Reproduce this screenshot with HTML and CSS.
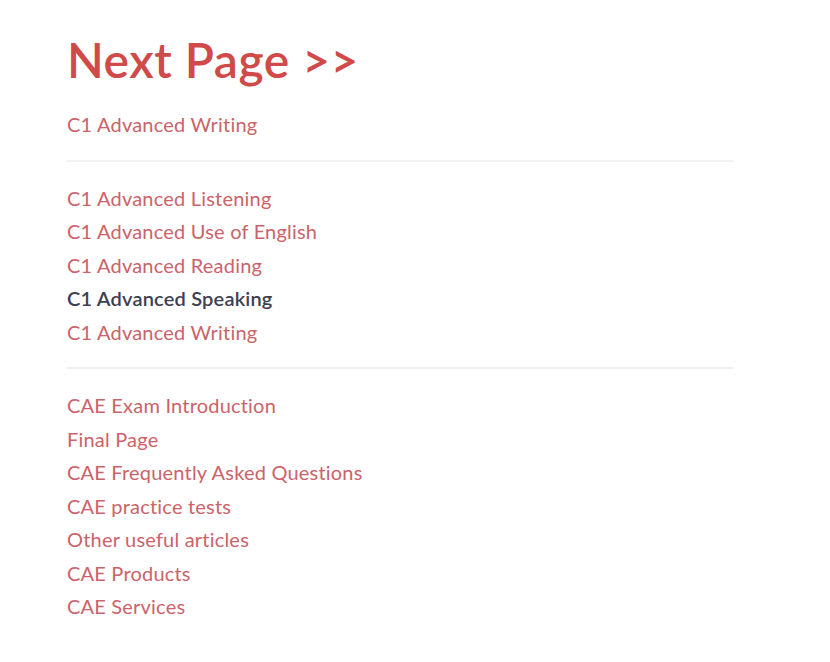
FILE: index.html
```html
<!DOCTYPE html>
<html lang="en">
<head>
  <meta charset="UTF-8">
  <meta name="viewport" content="width=device-width, initial-scale=1.0">
  <title>Next Page</title>
  <link rel="stylesheet" href="styles.css">
</head>
<body>
  <section class="content">
    <h2 class="next-title">Next Page &gt;&gt;</h2>

    <ul class="link-list">
      <li><a href="#">C1 Advanced Writing</a></li>
    </ul>

    <hr class="divider">

    <ul class="link-list">
      <li><a href="#">C1 Advanced Listening</a></li>
      <li><a href="#">C1 Advanced Use of English</a></li>
      <li><a href="#">C1 Advanced Reading</a></li>
      <li><a href="#" class="current">C1 Advanced Speaking</a></li>
      <li><a href="#">C1 Advanced Writing</a></li>
    </ul>

    <hr class="divider">

    <ul class="link-list">
      <li><a href="#">CAE Exam Introduction</a></li>
      <li><a href="#">Final Page</a></li>
      <li><a href="#">CAE Frequently Asked Questions</a></li>
      <li><a href="#">CAE practice tests</a></li>
      <li><a href="#">Other useful articles</a></li>
      <li><a href="#">CAE Products</a></li>
      <li><a href="#">CAE Services</a></li>
    </ul>
  </section>
</body>
</html>
```

FILE: styles.css
```css
body {
  font-family: 'Lato', 'Open Sans', sans-serif;
  margin: 0;
  padding: 0;
  background-color: #fff;
}

.content {
  width: 666px;
  margin-left: 67px;
  padding-top: 30px;
}

.next-title {
  margin: 0 0 18px;
  font-size: 48px;
  font-weight: 600;
  line-height: 60px;
  letter-spacing: 0.5px;
  color: #d04a4a;
}

.link-list {
  list-style: none;
  margin: 0;
  padding: 0;
}

.link-list li {
  line-height: 33.5px;
  font-size: 20px;
  letter-spacing: 0.2px;
}

.link-list a {
  color: #cb636a;
  text-decoration: none;
}

.link-list a.current {
  color: #3d4051;
  font-weight: 600;
}

.divider {
  border: none;
  border-top: 2px solid #f1f1f1;
  margin: 18px 0 20px;
}
```
